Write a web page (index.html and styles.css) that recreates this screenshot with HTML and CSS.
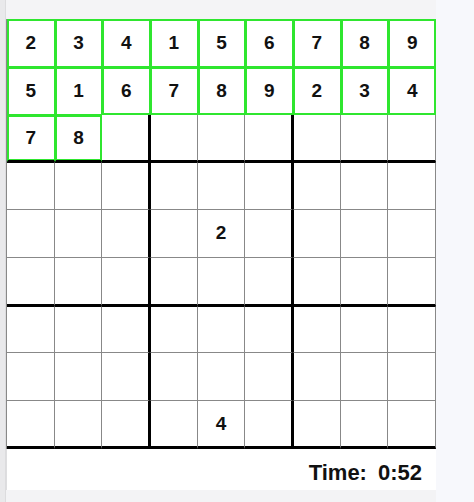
FILE: index.html
```html
<!DOCTYPE html>
<html lang="en">
<head>
<meta charset="utf-8">
<title>Sudoku</title>
<link rel="stylesheet" href="styles.css">
</head>
<body>
<div class="rail"></div>
<div class="content">
  <div class="topband"></div>
  <div class="panel">
    <div class="board">
      <div class="c g">2</div><div class="c g">3</div><div class="c g x">4</div><div class="c g l">1</div><div class="c g">5</div><div class="c g x">6</div><div class="c g l">7</div><div class="c g">8</div><div class="c g er">9</div>
      <div class="c g">5</div><div class="c g">1</div><div class="c g x eb">6</div><div class="c g l eb">7</div><div class="c g eb">8</div><div class="c g x eb">9</div><div class="c g l eb">2</div><div class="c g eb">3</div><div class="c g eb er">4</div>
      <div class="c g y">7</div><div class="c g y er">8</div><div class="c x y"></div><div class="c l y"></div><div class="c y"></div><div class="c x y"></div><div class="c l y"></div><div class="c y"></div><div class="c y"></div>
      <div class="c t"></div><div class="c t"></div><div class="c x t"></div><div class="c l t"></div><div class="c t"></div><div class="c x t"></div><div class="c l t"></div><div class="c t"></div><div class="c t"></div>
      <div class="c"></div><div class="c"></div><div class="c x"></div><div class="c l"></div><div class="c">2</div><div class="c x"></div><div class="c l"></div><div class="c"></div><div class="c"></div>
      <div class="c y"></div><div class="c y"></div><div class="c x y"></div><div class="c l y"></div><div class="c y"></div><div class="c x y"></div><div class="c l y"></div><div class="c y"></div><div class="c y"></div>
      <div class="c t"></div><div class="c t"></div><div class="c x t"></div><div class="c l t"></div><div class="c t"></div><div class="c x t"></div><div class="c l t"></div><div class="c t"></div><div class="c t"></div>
      <div class="c"></div><div class="c"></div><div class="c x"></div><div class="c l"></div><div class="c"></div><div class="c x"></div><div class="c l"></div><div class="c"></div><div class="c"></div>
      <div class="c z"></div><div class="c z"></div><div class="c x z"></div><div class="c l z"></div><div class="c z">4</div><div class="c x z"></div><div class="c l z"></div><div class="c z"></div><div class="c z"></div>
    </div>
    <div class="timebar"><span class="label">Time:</span><span class="clock">0:52</span></div>
  </div>
  <div class="footband"></div>
</div>
</body>
</html>
```

FILE: styles.css
```css
html, body {
  margin: 0;
  padding: 0;
}
body {
  background: #f7f8fc;
  display: flex;
  min-height: 502px;
  font-family: "Liberation Sans", Arial, sans-serif;
}
.rail {
  width: 5px;
  background: #e9e9eb;
  border-right: 1px solid #dcdcde;
}
.content {
  width: 430px;
  display: flex;
  flex-direction: column;
}
.topband {
  height: 19px;
  background: #f4f4f6;
}
.panel {
  background: #fff;
}
.board {
  box-sizing: border-box;
  width: 430px;
  height: 430px;
  border-left: 1px solid #888;
  display: grid;
  grid-template-columns: repeat(9, 1fr);
  grid-template-rows: repeat(9, 1fr);
}
.c {
  --gr: #2fe62f;
  box-sizing: border-box;
  border-right: 1px solid #888;
  border-bottom: 1px solid #888;
  display: flex;
  align-items: center;
  justify-content: center;
  font-weight: bold;
  font-size: 19px;
  color: #111;
  background: #fff;
}
.c.x { border-right: 2px solid #000; }
.c.l { border-left: 1px solid #000; }
.c.y { border-bottom: 2px solid #000; }
.c.t { border-top: 1px solid #000; }
.c.z { border-bottom: 3px solid #000; }
.c.g {
  border: 1px solid var(--gr);
  box-shadow: inset 1px 1px 0 var(--gr);
}
.c.g.eb {
  box-shadow: inset 1px 1px 0 var(--gr), inset 0 -1px 0 var(--gr);
}
.c.g.er {
  box-shadow: inset 1px 1px 0 var(--gr), inset -1px 0 0 var(--gr);
}
.c.g.eb.er {
  box-shadow: inset 1px 1px 0 var(--gr), inset -1px -1px 0 var(--gr);
}
.c.g.y {
  border-bottom: 2px solid #000;
  box-shadow: inset 1px 1px 0 var(--gr), inset 0 -1px 0 var(--gr);
}
.c.g.y.er {
  box-shadow: inset 1px 1px 0 var(--gr), inset -1px -1px 0 var(--gr);
}
.timebar {
  box-sizing: border-box;
  height: 41px;
  padding: 13px 14px 0 0;
  border-left: 1px solid #dedee0;
  display: flex;
  justify-content: flex-end;
  font-weight: bold;
  font-size: 22px;
  line-height: 22px;
  color: #111;
}
.clock {
  margin-left: 11px;
}
.footband {
  flex: 1;
  background: #f3f3f5;
}
```
